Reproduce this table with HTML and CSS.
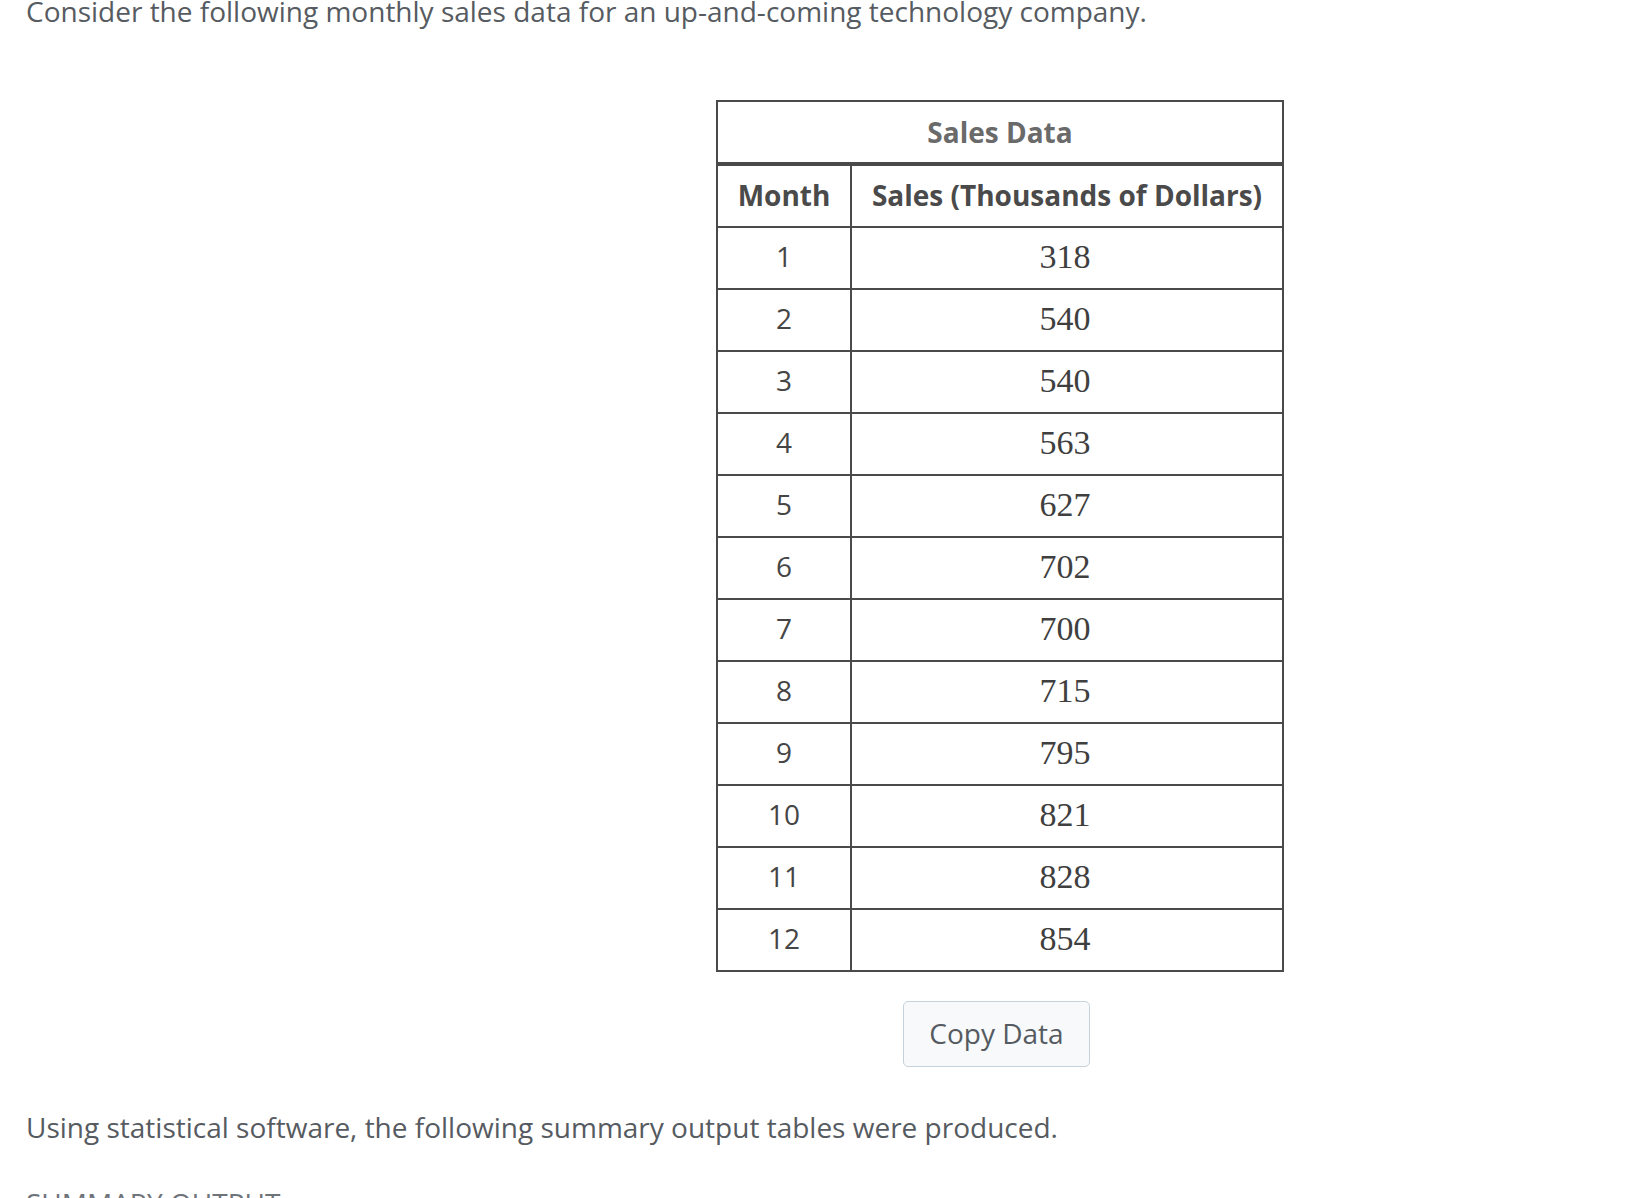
FILE: index.html
```html
<!DOCTYPE html>
<html>
<head>
<meta charset="utf-8">
<link rel="stylesheet" href="styles.css">
</head>
<body>
<div class="page">
  <p class="intro">Consider the following monthly sales data for an up-and-coming technology company.</p>
  <table class="sales">
    <colgroup>
      <col class="col-month">
      <col class="col-sales">
    </colgroup>
    <thead>
      <tr><th class="title" colspan="2">Sales Data</th></tr>
      <tr class="heads"><th class="c1">Month</th><th class="c2">Sales (Thousands of Dollars)</th></tr>
    </thead>
    <tbody>
      <tr><td class="c1">1</td><td class="c2 num">318</td></tr>
      <tr><td class="c1">2</td><td class="c2 num">540</td></tr>
      <tr><td class="c1">3</td><td class="c2 num">540</td></tr>
      <tr><td class="c1">4</td><td class="c2 num">563</td></tr>
      <tr><td class="c1">5</td><td class="c2 num">627</td></tr>
      <tr><td class="c1">6</td><td class="c2 num">702</td></tr>
      <tr><td class="c1">7</td><td class="c2 num">700</td></tr>
      <tr><td class="c1">8</td><td class="c2 num">715</td></tr>
      <tr><td class="c1">9</td><td class="c2 num">795</td></tr>
      <tr><td class="c1">10</td><td class="c2 num">821</td></tr>
      <tr><td class="c1">11</td><td class="c2 num">828</td></tr>
      <tr><td class="c1">12</td><td class="c2 num">854</td></tr>
    </tbody>
  </table>
  <div class="actions"><button class="copy">Copy Data</button></div>
  <p class="para">Using statistical software, the following summary output tables were produced.</p>
  <p class="para summary">SUMMARY OUTPUT</p>
</div>
</body>
</html>
```
FILE: styles.css
```css
html, body {
  margin: 0;
  padding: 0;
  background: #ffffff;
}
body {
  overflow: hidden;
  height: 1198px;
}
.page {
  padding-left: 26px;
  font-family: "Open Sans", "Liberation Sans", sans-serif;
  color: #565b61;
}
.intro {
  margin: -9px 0 0 0;
  font-size: 28px;
  line-height: 40px;
}
.sales {
  margin: 69px 0 0 690px;
  width: 568px;
  table-layout: fixed;
  border-collapse: separate;
  border-spacing: 0;
  border: 2px solid #4a4a4a;
}
.col-month {
  width: 132px;
}
.col-sales {
  width: 432px;
}
.sales th, .sales td {
  padding: 0;
  text-align: center;
  vertical-align: middle;
  line-height: 60px;
  white-space: nowrap;
  border-top: 2px solid #4a4a4a;
  border-left: 2px solid #4a4a4a;
  color: #454545;
}
.sales .title {
  border-top: 0;
  border-left: 0;
  font-size: 28px;
  font-weight: 700;
  color: #6a6a6a;
}
.sales .heads th {
  border-top-width: 4px;
  font-size: 28px;
  font-weight: 700;
  color: #4a4a4a;
  line-height: 58px;
  padding-bottom: 2px;
}
.sales .c1 {
  border-left: 0;
}
.sales td {
  line-height: 57px;
  padding-bottom: 3px;
}
.sales td.c1 {
  font-size: 28px;
}
.sales td.num {
  font-family: "Liberation Serif", "Times New Roman", serif;
  font-size: 34px;
  color: #3f3f3f;
  padding-right: 4px;
}
.actions {
  margin-top: 29px;
  padding-left: 877px;
}
.copy {
  width: 187px;
  height: 66px;
  margin: 0;
  padding: 0 0 2px 0;
  font-family: "Open Sans", "Liberation Sans", sans-serif;
  font-size: 28px;
  color: #555b61;
  background: #f7f9fa;
  border: 1px solid #c6d2db;
  border-radius: 5px;
}
.para {
  margin: 40px 0 0 0;
  font-size: 28px;
  line-height: 40px;
}
.summary {
  margin-top: 36px;
  color: #6f747a;
}
```
